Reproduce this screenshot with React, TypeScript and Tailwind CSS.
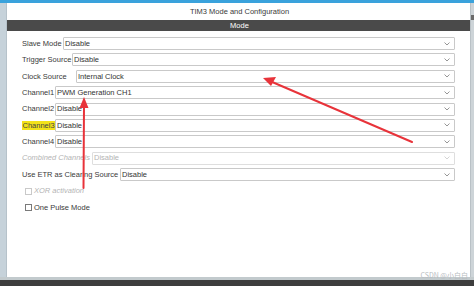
import React from "react";

type Row = {
    label: string;
    value: string;
    labelW: string;
    disabled?: boolean;
    highlight?: boolean;
};

const rows: Row[] = [
    { label: "Slave Mode", value: "Disable", labelW: "w-[41px]" },
    { label: "Trigger Source", value: "Disable", labelW: "w-[50px]" },
    { label: "Clock Source", value: "Internal Clock", labelW: "w-[54px]" },
    { label: "Channel1", value: "PWM Generation CH1", labelW: "w-[33px]" },
    { label: "Channel2", value: "Disable", labelW: "w-[33px]" },
    { label: "Channel3", value: "Disable", labelW: "w-[33px]", highlight: true },
    { label: "Channel4", value: "Disable", labelW: "w-[33px]" },
    { label: "Combined Channels", value: "Disable", labelW: "w-[70px]", disabled: true },
    { label: "Use ETR as Clearing Source", value: "Disable", labelW: "w-[98px]" },
];

function Chevron({ disabled }: { disabled?: boolean }) {
    return (
        <svg width="6" height="4" viewBox="0 0 6 4" className="mr-[4px]">
            <polyline
                points="0.5,0.5 3,3 5.5,0.5"
                fill="none"
                stroke={disabled ? "#cfcfcf" : "#8a8a8a"}
                strokeWidth="0.9"
            />
        </svg>
    );
}

function SelectRow({ row }: { row: Row }) {
    return (
        <div className="flex items-center h-[13px]">
            <div className={`${row.labelW} shrink-0 flex items-center`}>
                <span
                    className={
                        row.highlight
                            ? "bg-[#f3e21a] text-[#444] px-[0.5px] leading-[9px]"
                            : row.disabled
                              ? "text-[#b4b4b4] italic"
                              : "text-[#3a3a3a]"
                    }
                >
                    {row.label}
                </span>
            </div>
            <div
                className={`flex-1 h-[13px] flex items-center justify-between bg-white border rounded-[1px] ${
                    row.disabled ? "border-[#dedede]" : "border-[#c9c9c9]"
                }`}
            >
                <span className={`pl-[1px] ${row.disabled ? "text-[#b4b4b4]" : "text-[#333]"}`}>
                    {row.value}
                </span>
                <Chevron disabled={row.disabled} />
            </div>
        </div>
    );
}

function CheckRow({ label, disabled }: { label: string; disabled?: boolean }) {
    return (
        <div className="flex items-center h-[13px] pl-[3px] gap-[2px]">
            <div
                className={`w-[7px] h-[7px] border bg-white ${
                    disabled ? "border-[#c9c9c9]" : "border-[#7a7a7a]"
                }`}
            />
            <span className={disabled ? "text-[#b4b4b4] italic" : "text-[#3a3a3a]"}>{label}</span>
        </div>
    );
}

export default function App() {
    return (
        <div className="relative w-[474px] h-[286px] overflow-hidden bg-[#c8d3da] font-['Liberation_Sans',Arial,sans-serif] text-[7.5px] leading-none">
            <div className="h-[3px] bg-[#3aa2dc]" />

            <div className="flex h-[274px]">
                {/* left gutter */}
                <div className="w-[7px] bg-[#c6d2da] border-r border-[#b6c2ca]" />

                {/* panel */}
                <div className="flex-1 bg-white flex flex-col">
                    <div className="h-[17px] flex items-center justify-center text-[#3a3a3a] pl-[2px]">
                        TIM3 Mode and Configuration
                    </div>
                    <div className="h-[11px] bg-[#4a4a4a] text-white flex items-center justify-center pl-[2px]">
                        Mode
                    </div>

                    <div className="pl-[15px] pr-[15px] pt-[6px] flex flex-col gap-[3.4px]">
                        {rows.map((r) => (
                            <SelectRow key={r.label} row={r} />
                        ))}
                        <CheckRow label="XOR activation" disabled />
                        <CheckRow label="One Pulse Mode" />
                    </div>
                </div>

                {/* scrollbar */}
                <div className="w-[4px] bg-[#cdd4d8] border-l border-[#b9c1c6] flex flex-col">
                    <div className="h-[12px]" />
                    <div className="h-[5px] bg-[#6a6a6a]" />
                </div>
            </div>

            <div className="h-[3px] bg-[#c2cacd]" />
            <div className="h-[6px] bg-[#3d3d3d]" />

            <div className="absolute right-[6px] bottom-[7px] text-[7px] text-[#b8bcbf] font-['Noto_Sans_CJK_SC',sans-serif]">
                CSDN @小白白
            </div>

            {/* red annotation arrows */}
            <svg className="absolute inset-0 pointer-events-none" width="474" height="286" viewBox="0 0 474 286">
                <line x1="412" y1="142" x2="271" y2="81.5" stroke="#e8333a" strokeWidth="2" strokeLinecap="round" />
                <polygon points="263,78 276,77 271,86" fill="#e8333a" />
                <line x1="83.5" y1="188" x2="84" y2="106" stroke="#e8333a" strokeWidth="2" strokeLinecap="round" />
                <polygon points="84,97 79.5,108 88.5,108" fill="#e8333a" />
            </svg>
        </div>
    );
}
